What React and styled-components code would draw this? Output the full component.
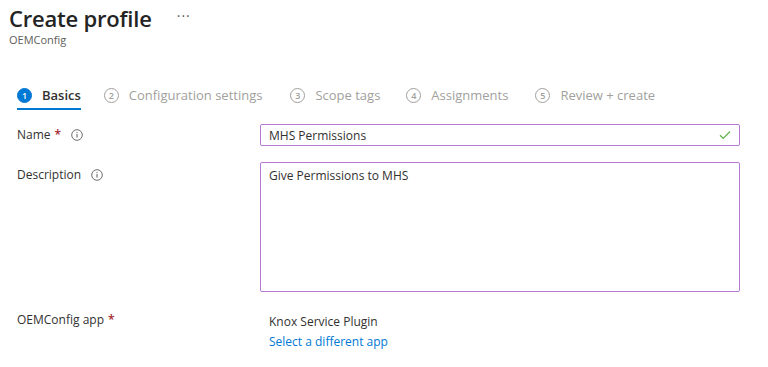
import React from "react";
import styled, { createGlobalStyle } from "styled-components";

const GlobalStyle = createGlobalStyle`
  html, body {
    margin: 0;
    padding: 0;
    background: #fff;
  }
  body {
    font-family: "Segoe UI", "Open Sans", "Noto Sans", sans-serif;
    color: #323130;
  }
`;

const Page = styled.div`
  width: 768px;
  height: 367px;
  overflow: hidden;
  padding: 2px 0 0 9px;
  box-sizing: border-box;
`;

const Header = styled.div`
  display: flex;
  align-items: center;
  gap: 25px;
`;

const Title = styled.h1`
  margin: 0;
  font-size: 22px;
  font-weight: 600;
  letter-spacing: -0.2px;
  color: #242424;
  line-height: 32px;
`;

const More = styled.span`
  font-size: 14px;
  color: #605e5c;
  letter-spacing: 1px;
  margin-top: -6px;
`;

const Subtitle = styled.div`
  font-size: 11px;
  color: #605e5c;
  line-height: 14px;
  margin-top: -1px;
`;

const Tabs = styled.div`
  display: flex;
  margin: 35px 0 0 8px;
  height: 28px;
`;

const Tab = styled.div`
  display: flex;
  align-items: center;
  gap: 10px;
  height: 26px;
  margin-right: ${(p) => p.$gap}px;
  border-bottom: 2px solid ${(p) => (p.$active ? "#0078d4" : "transparent")};
  font-size: 13px;
  font-weight: ${(p) => (p.$active ? 600 : 400)};
  color: ${(p) => (p.$active ? "#323130" : "#a19f9d")};
  white-space: nowrap;
`;

const StepBadge = styled.span`
  width: 15px;
  height: 15px;
  border-radius: 50%;
  box-sizing: border-box;
  display: inline-flex;
  align-items: center;
  justify-content: center;
  font-size: 9px;
  font-weight: 600;
  background: ${(p) => (p.$active ? "#0078d4" : "transparent")};
  color: ${(p) => (p.$active ? "#fff" : "#a19f9d")};
  border: 1px solid ${(p) => (p.$active ? "#0078d4" : "#a19f9d")};
`;

const Form = styled.div`
  display: flex;
  flex-direction: column;
  gap: 16px;
  margin: 14px 0 0 8px;
`;

const Row = styled.div`
  display: grid;
  grid-template-columns: 243px 480px;
  align-items: start;
`;

const Label = styled.div`
  display: flex;
  align-items: center;
  gap: 4px;
  font-size: 12px;
  color: #323130;
  line-height: 22px;
  padding-top: ${(p) => p.$pad || 0}px;
`;

const Required = styled.span`
  color: #a4262c;
  font-weight: 600;
`;

const InfoIcon = styled.svg`
  width: 12px;
  height: 12px;
  margin-left: 6px;
`;

const InputBox = styled.div`
  display: flex;
  align-items: center;
  justify-content: space-between;
  height: 22px;
  box-sizing: border-box;
  border: 1px solid #b47cd4;
  border-radius: 2px;
  padding: 0 8px;
  font-size: 12px;
  color: #323130;
`;

const TextArea = styled.div`
  height: 130px;
  border: 1px solid #b47cd4;
  border-radius: 2px;
  padding: 3px 8px;
  font-size: 12px;
  line-height: 20px;
  color: #323130;
  box-sizing: border-box;
`;

const AppInfo = styled.div`
  display: flex;
  flex-direction: column;
  padding: 0 9px;
  font-size: 12px;
  line-height: 20px;
  margin-top: 4px;
`;

const AppLink = styled.a`
  color: #0078d4;
  text-decoration: none;
`;

const Info = () => (
  <InfoIcon viewBox="0 0 12 12">
    <circle cx="6" cy="6" r="5.3" fill="none" stroke="#605e5c" strokeWidth="0.9" />
    <rect x="5.5" y="5" width="1" height="3.6" fill="#605e5c" />
    <circle cx="6" cy="3.6" r="0.6" fill="#605e5c" />
  </InfoIcon>
);

const Check = () => (
  <svg width="12" height="10" viewBox="0 0 12 10">
    <path d="M1 5.2 L4.2 8.3 L11 1.5" fill="none" stroke="#5fb548" strokeWidth="1.2" />
  </svg>
);

const steps = [
  { label: "Basics", gap: 23 },
  { label: "Configuration settings", gap: 28 },
  { label: "Scope tags", gap: 26 },
  { label: "Assignments", gap: 27 },
  { label: "Review + create", gap: 0 },
];

export default function App() {
  return (
    <>
      <GlobalStyle />
      <Page>
        <Header>
          <Title>Create profile</Title>
          <More>···</More>
        </Header>
        <Subtitle>OEMConfig</Subtitle>
        <Tabs>
          {steps.map((s, i) => (
            <Tab key={s.label} $active={i === 0} $gap={s.gap}>
              <StepBadge $active={i === 0}>{i + 1}</StepBadge>
              {s.label}
            </Tab>
          ))}
        </Tabs>
        <Form>
          <Row>
            <Label>
              Name <Required>*</Required>
              <Info />
            </Label>
            <InputBox>
              MHS Permissions
              <Check />
            </InputBox>
          </Row>
          <Row>
            <Label $pad={2}>
              Description
              <Info />
            </Label>
            <TextArea>Give Permissions to MHS</TextArea>
          </Row>
          <Row>
            <Label $pad={1}>
              OEMConfig app <Required>*</Required>
            </Label>
            <AppInfo>
              <span>Knox Service Plugin</span>
              <AppLink href="#">Select a different app</AppLink>
            </AppInfo>
          </Row>
        </Form>
      </Page>
    </>
  );
}
